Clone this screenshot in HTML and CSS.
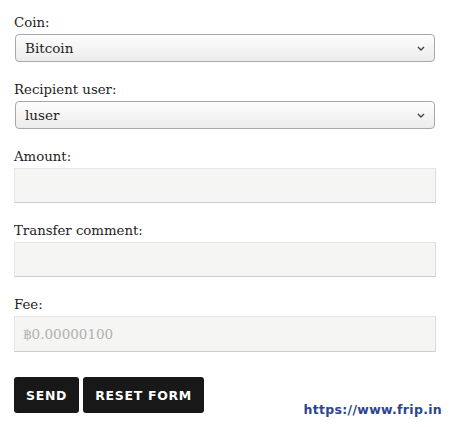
FILE: index.html
```html
<!DOCTYPE html>
<html>
<head>
<meta charset="utf-8">
<link rel="stylesheet" href="styles.css">
</head>
<body>
<form class="form">
  <div class="field">
    <label class="label">Coin:</label>
    <div class="select-wrap">
      <select class="select"><option>Bitcoin</option></select>
      <svg class="chevron" width="8" height="5" viewBox="0 0 8 5"><path d="M1 1 L4 4 L7 1" fill="none" stroke="#444" stroke-width="1.4"/></svg>
    </div>
  </div>
  <div class="field">
    <label class="label">Recipient user:</label>
    <div class="select-wrap">
      <select class="select"><option>luser</option></select>
      <svg class="chevron" width="8" height="5" viewBox="0 0 8 5"><path d="M1 1 L4 4 L7 1" fill="none" stroke="#444" stroke-width="1.4"/></svg>
    </div>
  </div>
  <div class="field">
    <label class="label">Amount:</label>
    <input class="input" type="text">
  </div>
  <div class="field">
    <label class="label">Transfer comment:</label>
    <input class="input" type="text">
  </div>
  <div class="field">
    <label class="label">Fee:</label>
    <input class="input input-fee" type="text" placeholder="฿0.00000100">
  </div>
  <div class="actions">
    <button type="button" class="btn">Send</button>
    <button type="button" class="btn">Reset form</button>
  </div>
</form>
<div class="watermark">https://www.frip.in</div>
</body>
</html>
```
FILE: styles.css
```css
html, body {
  margin: 0;
  background: #ffffff;
}
body {
  padding: 13px 14px 0 14px;
  font-family: "DejaVu Serif", "Liberation Serif", serif;
  color: #1e1e1e;
  position: relative;
  height: 427px;
  box-sizing: border-box;
}
.form {
  display: flex;
  flex-direction: column;
}
.field {
  display: flex;
  flex-direction: column;
  margin-bottom: 18px;
}
.label {
  display: block;
  font-size: 13.3px;
  line-height: 20px;
  margin-bottom: 1px;
  color: #1e1e1e;
}
.select-wrap {
  position: relative;
  margin: 0 1px;
}
.select {
  -webkit-appearance: none;
  appearance: none;
  width: 100%;
  height: 28px;
  box-sizing: border-box;
  border: 1px solid #a8a8a8;
  border-radius: 4px;
  background: linear-gradient(#fdfdfd, #ececec);
  font-family: "DejaVu Serif", "Liberation Serif", serif;
  font-size: 13.5px;
  color: #1e1e1e;
  padding: 0 0 0 9px;
  margin: 0;
  outline: none;
}
.chevron {
  position: absolute;
  right: 10px;
  top: 12px;
}
.input {
  height: 35px;
  box-sizing: border-box;
  width: 100%;
  margin: 0;
  border: 1px solid #e6e7e5;
  border-bottom-color: #cdcdcd;
  border-right-color: #dcdcdc;
  background: #f5f6f4;
  font-family: "DejaVu Serif", "Liberation Serif", serif;
  font-size: 13.5px;
  padding: 0 8px;
  outline: none;
}
.input-fee {
  height: 36px;
}
.input::placeholder {
  color: #b0b0b0;
}
.actions {
  display: flex;
  gap: 4px;
  margin-top: 7px;
}
.btn {
  height: 36px;
  box-sizing: border-box;
  background: #171817;
  color: #ffffff;
  border: none;
  border-radius: 3px;
  padding: 0 12px;
  font-family: "DejaVu Sans", "Liberation Sans", sans-serif;
  font-weight: bold;
  font-size: 12.5px;
  letter-spacing: 0.7px;
  text-transform: uppercase;
}
.watermark {
  position: absolute;
  right: 8px;
  top: 402px;
  font-family: "DejaVu Sans", "Liberation Sans", sans-serif;
  font-weight: bold;
  font-size: 12.5px;
  letter-spacing: 0.3px;
  color: #2d4490;
}
```
